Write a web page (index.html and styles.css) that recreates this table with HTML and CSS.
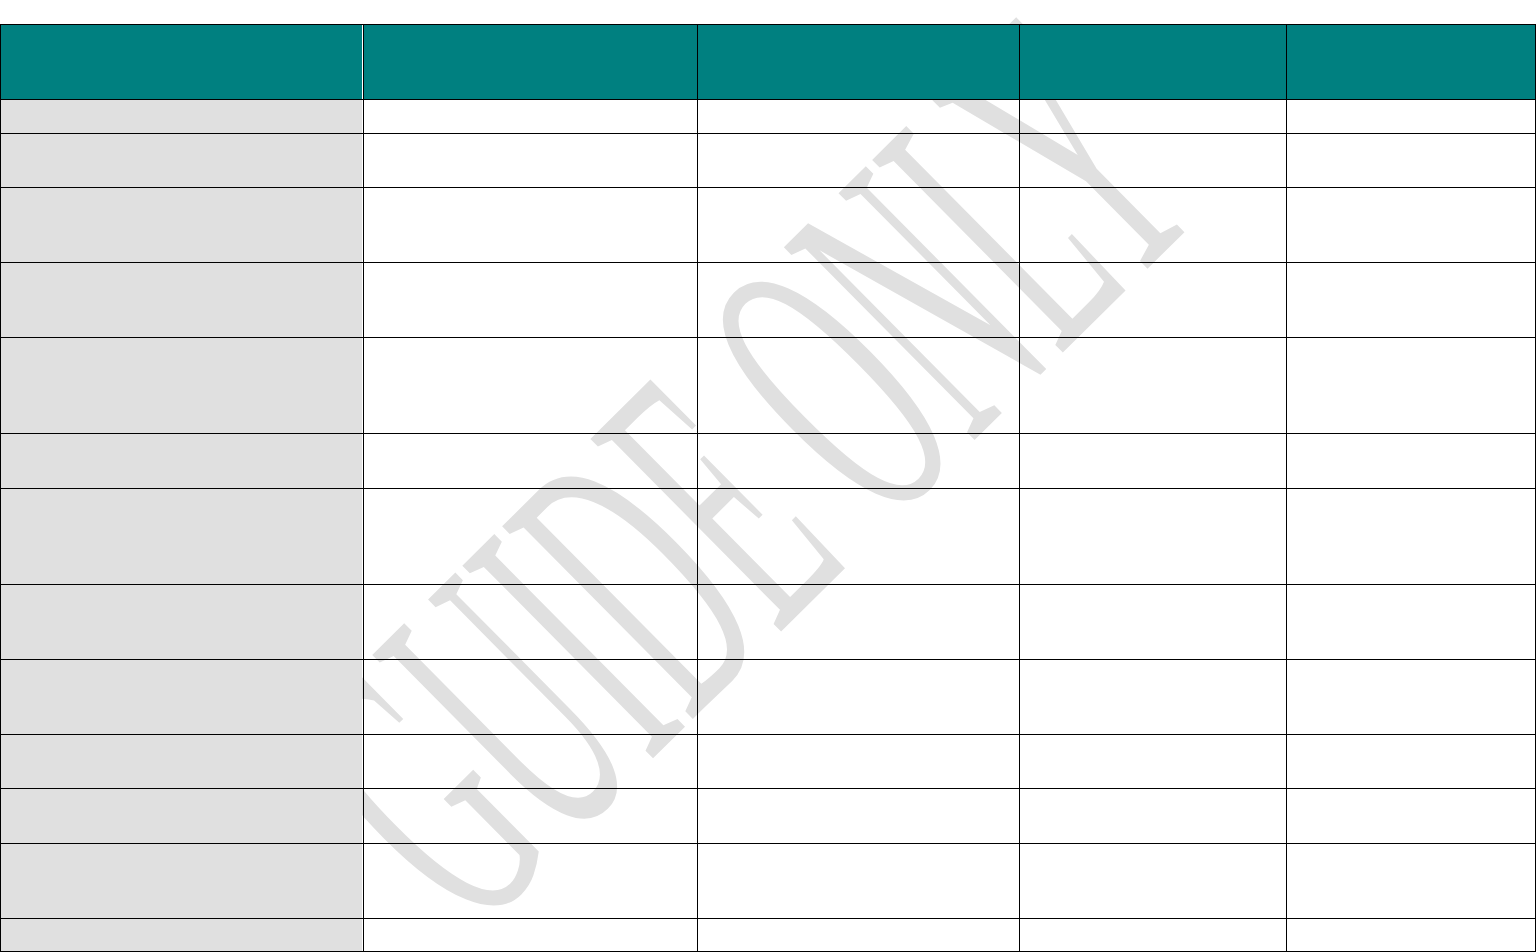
FILE: index.html
```html
<!DOCTYPE html>
<html lang="en">
<head>
<meta charset="utf-8">
<title>Guide only table</title>
<link rel="stylesheet" href="styles.css">
</head>
<body>
<div class="page">
  <div class="grid">
    <div class="cell head first"></div><div class="cell head"></div><div class="cell head"></div><div class="cell head"></div><div class="cell head"></div>
    <div class="cell first"></div><div class="cell"></div><div class="cell"></div><div class="cell"></div><div class="cell"></div>
    <div class="cell first"></div><div class="cell"></div><div class="cell"></div><div class="cell"></div><div class="cell"></div>
    <div class="cell first"></div><div class="cell"></div><div class="cell"></div><div class="cell"></div><div class="cell"></div>
    <div class="cell first"></div><div class="cell"></div><div class="cell"></div><div class="cell"></div><div class="cell"></div>
    <div class="cell first"></div><div class="cell"></div><div class="cell"></div><div class="cell"></div><div class="cell"></div>
    <div class="cell first"></div><div class="cell"></div><div class="cell"></div><div class="cell"></div><div class="cell"></div>
    <div class="cell first"></div><div class="cell"></div><div class="cell"></div><div class="cell"></div><div class="cell"></div>
    <div class="cell first"></div><div class="cell"></div><div class="cell"></div><div class="cell"></div><div class="cell"></div>
    <div class="cell first"></div><div class="cell"></div><div class="cell"></div><div class="cell"></div><div class="cell"></div>
    <div class="cell first"></div><div class="cell"></div><div class="cell"></div><div class="cell"></div><div class="cell"></div>
    <div class="cell first"></div><div class="cell"></div><div class="cell"></div><div class="cell"></div><div class="cell"></div>
    <div class="cell first"></div><div class="cell"></div><div class="cell"></div><div class="cell"></div><div class="cell"></div>
    <div class="cell first"></div><div class="cell"></div><div class="cell"></div><div class="cell"></div><div class="cell"></div>
  </div>
  <svg class="watermark" width="1536" height="952" viewBox="0 0 1536 952" aria-hidden="true">
    <text class="watermark-text" transform="matrix(1.2222 -1.2102 2.9129 2.9419 472.1 937.5)" x="0" y="0">GUIDE ONLY</text>
  </svg>
</div>
</body>
</html>
```

FILE: styles.css
```css
html, body {
  margin: 0;
  padding: 0;
  background: #ffffff;
}

.page {
  position: relative;
  width: 1536px;
  height: 952px;
  padding-top: 24px;
  box-sizing: border-box;
  overflow: hidden;
}

.grid {
  display: grid;
  width: 1536px;
  box-sizing: border-box;
  grid-template-columns: 363px 334px 322px 267px 249px;
  grid-template-rows: 75px 34px 54px 75px 75px 96px 55px 96px 75px 75px 54px 55px 75px 33px;
  border-left: 1px solid #000;
  border-top: 1px solid #000;
}

.cell {
  box-sizing: border-box;
  border-right: 1px solid #000;
  border-bottom: 1px solid #000;
  background: #ffffff;
}

.cell.head {
  background: #008080;
}

.cell.first {
  background: #e0e0e0;
  box-shadow: inset -1px 0 0 #ffffff;
}

.cell.head.first {
  background: #008080;
}

.watermark {
  position: absolute;
  left: 0;
  top: 0;
  pointer-events: none;
  mix-blend-mode: darken;
}

.watermark-text {
  font-family: "Liberation Serif", "Times New Roman", serif;
  font-size: 100px;
  fill: #e0e0e0;
}
```
